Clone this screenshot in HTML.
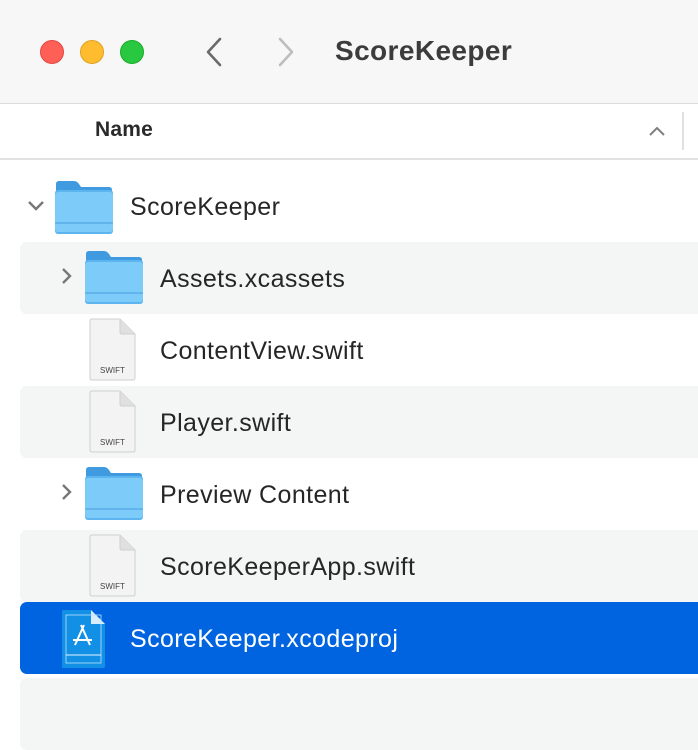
<!DOCTYPE html>
<html><head><meta charset="utf-8"><style>
*{margin:0;padding:0;box-sizing:border-box}
body{width:698px;height:694px;overflow:hidden;background:#fff;font-family:"Liberation Sans",sans-serif;position:relative;color:#262626}
.abs{position:absolute}
.tb{left:0;top:0;width:698px;height:104px;background:#f7f7f7;border-bottom:1px solid #dcdcdc}
.dot{width:24px;height:24px;border-radius:50%;top:40px}
.title{left:335px;top:35px;font-size:28px;letter-spacing:0.4px;font-weight:bold;color:#3c3c3c}
.hdr{left:0;top:104px;width:698px;height:56px;border-bottom:2px solid #e2e2e2}
.name{left:95px;top:118px;font-size:21px;letter-spacing:0.2px;font-weight:bold;color:#2a2a2a}
.row{left:20px;width:690px;height:72px;border-radius:7px;background:#f4f5f5}
.sel{background:#0064e0}
.txt{font-size:25px;letter-spacing:0.4px;color:#262626}
</style></head><body>
<div class="abs tb"></div>
<div class="abs dot" style="left:40px;background:#fe5f57;border:1px solid #e2463f"></div>
<div class="abs dot" style="left:80px;background:#febc2e;border:1px solid #dea123"></div>
<div class="abs dot" style="left:120px;background:#28c840;border:1px solid #1aab29"></div>
<svg class="abs" style="left:200px;top:36px" width="100" height="32"><path d="M20 3 L8 16 L20 29" fill="none" stroke="#6a6a6a" stroke-width="2.6" stroke-linecap="round" stroke-linejoin="round"/><path d="M80 3 L92 16 L80 29" fill="none" stroke="#bdbdbd" stroke-width="2.6" stroke-linecap="round" stroke-linejoin="round"/></svg>
<div class="abs title">ScoreKeeper</div>
<div class="abs hdr"></div>
<div class="abs name">Name</div>
<svg class="abs" style="left:648px;top:124px" width="20" height="14"><path d="M2 11 L9 4 L16 11" fill="none" stroke="#808080" stroke-width="2"/></svg>
<div class="abs" style="left:682px;top:112px;width:2px;height:38px;background:#e0e0e0"></div>

<div class="abs row" style="top:242px"></div>
<div class="abs row" style="top:386px"></div>
<div class="abs row" style="top:530px"></div>
<div class="abs row sel" style="top:602px"></div>
<div class="abs row" style="top:678px"></div>

<svg class="abs" style="left:26px;top:199px" width="20" height="14"><path d="M3 3 L10 10 L17 3" fill="none" stroke="#777" stroke-width="2.4"/></svg>
<svg class="abs" style="left:60px;top:266px" width="14" height="20"><path d="M3 3 L10 10 L3 17" fill="none" stroke="#777" stroke-width="2.4"/></svg>
<svg class="abs" style="left:60px;top:482px" width="14" height="20"><path d="M3 3 L10 10 L3 17" fill="none" stroke="#777" stroke-width="2.4"/></svg>

<svg class="abs" style="left:54px;top:180px" width="60" height="56"><path d="M2 4 Q2 1 5 1 H20 Q23 1 25 4 L27 7 H55 Q58 7 58 10 V20 H2Z" fill="#3f9ae0"/><rect x="1" y="10" width="58" height="44" rx="3" fill="#5db5ef"/><rect x="1" y="12" width="58" height="40" rx="3" fill="#7ccbf9"/><rect x="1" y="42" width="58" height="2" fill="#62b5ea"/></svg>
<svg class="abs" style="left:84px;top:250px" width="60" height="56"><path d="M2 4 Q2 1 5 1 H20 Q23 1 25 4 L27 7 H55 Q58 7 58 10 V20 H2Z" fill="#3f9ae0"/><rect x="1" y="10" width="58" height="44" rx="3" fill="#5db5ef"/><rect x="1" y="12" width="58" height="40" rx="3" fill="#7ccbf9"/><rect x="1" y="42" width="58" height="2" fill="#62b5ea"/></svg>
<svg class="abs" style="left:84px;top:466px" width="60" height="56"><path d="M2 4 Q2 1 5 1 H20 Q23 1 25 4 L27 7 H55 Q58 7 58 10 V20 H2Z" fill="#3f9ae0"/><rect x="1" y="10" width="58" height="44" rx="3" fill="#5db5ef"/><rect x="1" y="12" width="58" height="40" rx="3" fill="#7ccbf9"/><rect x="1" y="42" width="58" height="2" fill="#62b5ea"/></svg>

<svg class="abs" style="left:89px;top:318px" width="50" height="64"><path d="M3 1 H31 L46 16 V60 Q46 62 44 62 H3 Q1 62 1 60 V3 Q1 1 3 1Z" fill="#f3f3f3" stroke="#cfcfcf"/><path d="M31 1 V14 Q31 16 33 16 H46" fill="#e0e0e0" stroke="#cfcfcf"/><text x="23.5" y="55" font-size="8" text-anchor="middle" fill="#444" font-family="Liberation Sans">SWIFT</text></svg>
<svg class="abs" style="left:89px;top:390px" width="50" height="64"><path d="M3 1 H31 L46 16 V60 Q46 62 44 62 H3 Q1 62 1 60 V3 Q1 1 3 1Z" fill="#f3f3f3" stroke="#cfcfcf"/><path d="M31 1 V14 Q31 16 33 16 H46" fill="#e0e0e0" stroke="#cfcfcf"/><text x="23.5" y="55" font-size="8" text-anchor="middle" fill="#444" font-family="Liberation Sans">SWIFT</text></svg>
<svg class="abs" style="left:89px;top:534px" width="50" height="64"><path d="M3 1 H31 L46 16 V60 Q46 62 44 62 H3 Q1 62 1 60 V3 Q1 1 3 1Z" fill="#f3f3f3" stroke="#cfcfcf"/><path d="M31 1 V14 Q31 16 33 16 H46" fill="#e0e0e0" stroke="#cfcfcf"/><text x="23.5" y="55" font-size="8" text-anchor="middle" fill="#444" font-family="Liberation Sans">SWIFT</text></svg>

<svg class="abs" style="left:61px;top:609px" width="46" height="60"><path d="M2 1 H30 L44 15 V57 Q44 59 42 59 H2 Q1 59 1 57 V3 Q1 1 2 1Z" fill="#1290e6"/><path d="M30 1 V15 H44Z" fill="#d8ecfa"/><rect x="5" y="6" width="35" height="48" fill="none" stroke="#bfe2fa" stroke-width="0.8"/><line x1="5" y1="46" x2="40" y2="46" stroke="#e6f4fd" stroke-width="1"/><path d="M23 16 L14 36 M20 16 L29 36 M12 31 H31" stroke="#fff" stroke-width="2" fill="none"/></svg>

<div class="abs txt" style="left:130px;top:193px">ScoreKeeper</div>
<div class="abs txt" style="left:160px;top:265px">Assets.xcassets</div>
<div class="abs txt" style="left:160px;top:337px">ContentView.swift</div>
<div class="abs txt" style="left:160px;top:409px">Player.swift</div>
<div class="abs txt" style="left:160px;top:481px">Preview Content</div>
<div class="abs txt" style="left:160px;top:553px">ScoreKeeperApp.swift</div>
<div class="abs txt" style="left:130px;top:625px;color:#fff">ScoreKeeper.xcodeproj</div>
</body></html>
